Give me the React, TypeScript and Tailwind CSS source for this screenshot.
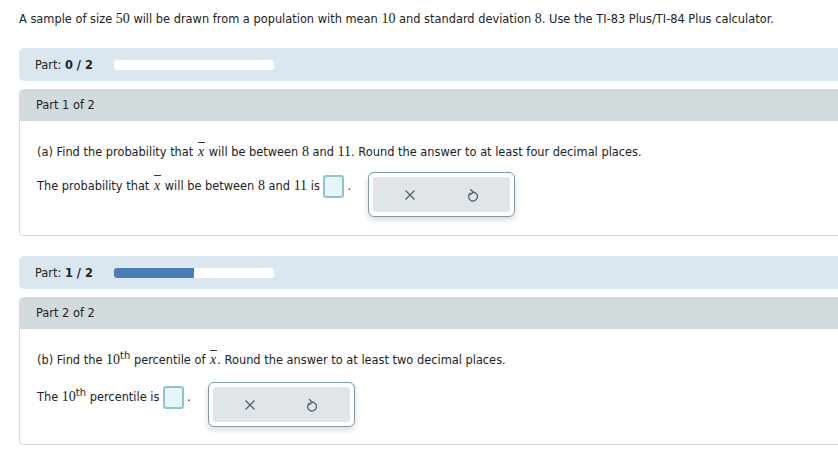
import React from 'react';

const serif = "font-['Liberation_Serif',serif] text-[14px]";

const XBar: React.FC = () => (
  <span className={`${serif} italic relative inline-block px-[1px]`}>
    <span className="absolute left-[1px] right-0 top-[0px] h-px bg-[#333]" />
    x
  </span>
);

const Num: React.FC<{ children: React.ReactNode }> = ({ children }) => (
  <span className={serif}>{children}</span>
);

const AnswerBox: React.FC = () => (
  <span className="inline-block align-middle w-[21px] h-[23px] rounded-[3px] border-2 border-[#8fc4cf] bg-[#e6f4f8]" />
);

const Tools: React.FC = () => (
  <div className="w-[147px] h-[45px] rounded-[6px] border border-[#7f9aa5] bg-white p-[4px] shadow-[0_3px_6px_rgba(0,0,0,0.15)]">
    <div className="h-full rounded-[3px] bg-[#dfe5e8] flex items-center justify-around px-[6px]">
      <svg width="12" height="12" viewBox="0 0 12 12" fill="none" stroke="#50636c" strokeWidth="1.3">
        <path d="M1.5 1.5l9 9M10.5 1.5l-9 9" />
      </svg>
      <svg width="12" height="14" viewBox="0 0 12 14" fill="none" stroke="#50636c" strokeWidth="1.3" strokeLinecap="round">
        <path d="M3.2 5.2A4.4 4.4 0 1 0 6 4.2" />
        <path d="M3.5 1.5l2.8 2.7-2.8 2.3" />
      </svg>
    </div>
  </div>
);

const PartBar: React.FC<{ done: number }> = ({ done }) => (
  <div className="h-[33px] rounded-l-[5px] bg-[#dae6f0] flex items-center pl-[16px] pt-[2px]">
    <span className="text-[#222]">
      Part: <b>{done}&nbsp;/&nbsp;2</b>
    </span>
    <div className="ml-[21px] -mt-[2px] w-[160px] h-[10px] rounded-[3px] bg-white overflow-hidden">
      <div className="h-full bg-[#4a7db5]" style={{ width: `${(done / 2) * 100}%` }} />
    </div>
  </div>
);

const PartHeader: React.FC<{ n: number }> = ({ n }) => (
  <div className="h-[32px] rounded-tl-[5px] bg-[#d3dadd] flex items-center pl-[17px] pt-[2px] text-[#222]">
    Part {n} of 2
  </div>
);

export default function App() {
  return (
    <div className="w-[838px] h-[470px] overflow-hidden bg-white font-['DejaVu_Sans',sans-serif] text-[11.4px] text-[#222]">
      <div className="pl-[19px] w-[860px] pt-[10px]">
        <p className="h-[18px] leading-[18px]">
          A sample of size <Num>50</Num> will be drawn from a population with mean <Num>10</Num> and standard
          deviation <Num>8</Num>. Use the TI-83 Plus/TI-84 Plus calculator.
        </p>

        <div className="mt-[20px]">
          <PartBar done={0} />
          <div className="mt-[8px]">
            <PartHeader n={1} />
            <div className="h-[115px] border border-t-0 border-[#d5dcdf] rounded-bl-[4px] pl-[17px]">
              <p className="pt-[21px] h-[50px] leading-[20px]">
                (a) Find the probability that <XBar /> will be between <Num>8</Num> and <Num>11</Num>. Round the
                answer to at least four decimal places.
              </p>
              <div className="flex items-center mt-[1px] h-[45px]">
                <span className="-mt-[17px]">
                  The probability that <XBar /> will be between <Num>8</Num> and <Num>11</Num> is{' '}
                  <AnswerBox />
                  <span className="ml-[3px]">.</span>
                </span>
                <div className="ml-[17px]">
                  <Tools />
                </div>
              </div>
            </div>
          </div>
        </div>

        <div className="mt-[20px]">
          <PartBar done={1} />
          <div className="mt-[8px]">
            <PartHeader n={2} />
            <div className="h-[116px] border border-t-0 border-[#d5dcdf] rounded-bl-[4px] pl-[17px]">
              <p className="pt-[21px] h-[50px] leading-[20px]">
                (b) Find the <Num>10</Num>
                <sup className="text-[10px]">th</sup> percentile of <XBar />. Round the answer to at least two
                decimal places.
              </p>
              <div className="flex items-center mt-[3px] h-[45px]">
                <span className="-mt-[15px]">
                  The <Num>10</Num>
                  <sup className="text-[10px]">th</sup> percentile is <AnswerBox />
                  <span className="ml-[3px]">.</span>
                </span>
                <div className="ml-[17px]">
                  <Tools />
                </div>
              </div>
            </div>
          </div>
        </div>
      </div>
    </div>
  );
}
